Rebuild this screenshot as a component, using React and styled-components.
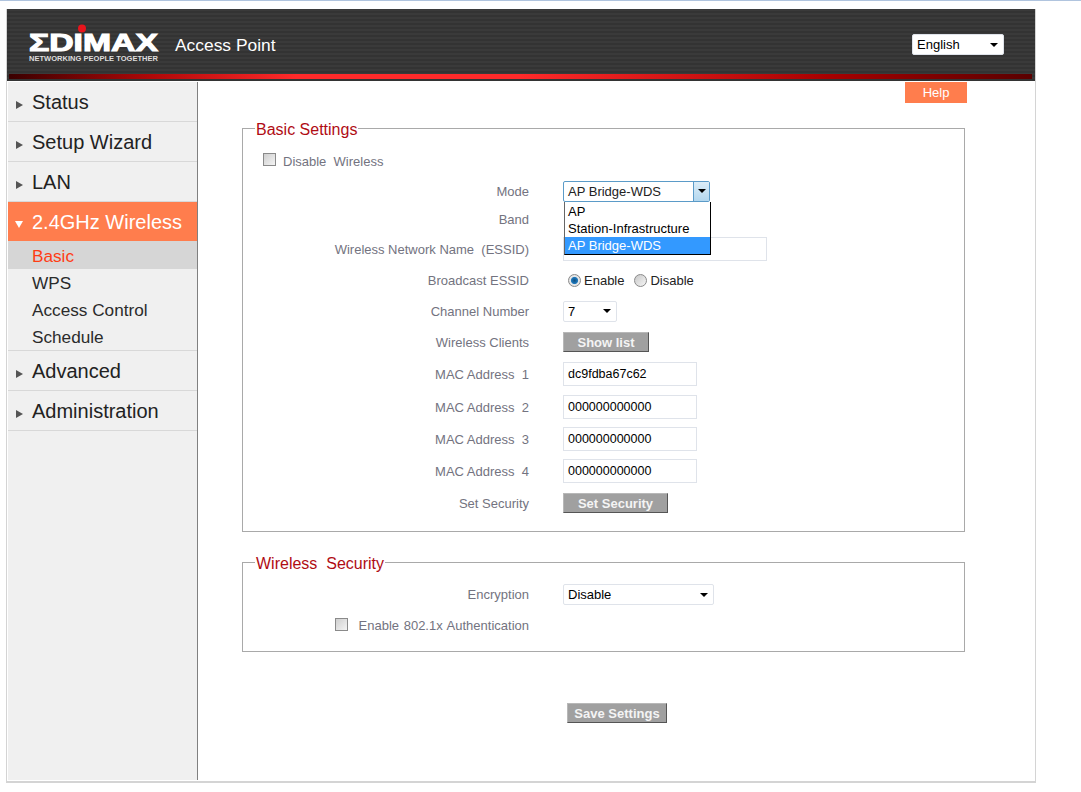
import React from 'react'
import styled, { createGlobalStyle } from 'styled-components'

const GlobalStyle = createGlobalStyle`
    html, body {
        margin: 0;
        padding: 0;
        background: #fff;
        font-family: "Liberation Sans", Arial, sans-serif;
    }
`

const TopLine = styled.div`
    height: 1px;
    background: #b0c4de;
    margin-bottom: 8px;
`

const Frame = styled.div`
    width: 1028px;
    height: 772px;
    margin-left: 6px;
    border: solid #d4d4d4;
    border-width: 0 1px 2px 1px;
    display: flex;
    flex-direction: column;
`

const Header = styled.header`
    height: 72px;
    flex: none;
    display: flex;
    flex-direction: column;
    background: repeating-linear-gradient(to bottom, #3a3a3a 0, #3a3a3a 2px, #333 2px, #333 4px);
`

const HeaderMain = styled.div`
    height: 65px;
    display: flex;
    align-items: center;
    padding: 6px 31px 0 20px;
    box-sizing: border-box;
`

const Logo = styled.svg`
    width: 134px;
    height: 42px;
    flex: none;
    margin-top: 1px;
`

const Product = styled.div`
    margin-left: 14px;
    margin-top: 2px;
    color: #fff;
    font-size: 17.4px;
    flex: 1;
`

const RedBar = styled.div`
    height: 5px;
    margin: 0 3px 0 2px;
    background: linear-gradient(to right, #3a0000 0, #b00808 14%, #ff2a2a 28%, #ff2a2a 50%, #a80000 80%, #5a0000 100%);
`

const Body = styled.div`
    flex: 1;
    display: flex;
    min-height: 0;
`

const Sidebar = styled.nav`
    width: 189px;
    margin: 1px 0 1px 1px;
    flex: none;
    background: #f0f0f0;
    border-right: 1px solid #808080;
`

const MenuItem = styled.div`
    height: 37px;
    padding-top: 2px;
    display: flex;
    align-items: center;
    font-size: 20px;
    color: ${p => (p.$active ? '#fff' : '#222')};
    background: ${p => (p.$active ? '#ff7d4d' : 'transparent')};
    border-bottom: ${p => (p.$active ? 'none' : '1px solid #d8d8d8')};
`

const Arrow = styled.span`
    width: 0;
    height: 0;
    margin: 4px 9px 0 8px;
    border-left: 7px solid #555;
    border-top: 4px solid transparent;
    border-bottom: 4px solid transparent;
`

const ArrowDown = styled.span`
    width: 0;
    height: 0;
    margin: 4px 9px 0 7px;
    border-top: 7px solid #fff;
    border-left: 4px solid transparent;
    border-right: 4px solid transparent;
`

const SubMenu = styled.div`
    border-bottom: 1px solid #d8d8d8;
`

const SubItem = styled.div`
    height: ${p => (p.$current ? '28px' : '27px')};
    box-sizing: border-box;
    padding: ${p => (p.$current ? '2px' : '1px')} 0 0 24px;
    display: flex;
    align-items: center;
    font-size: 17.2px;
    color: ${p => (p.$current ? '#ff3c14' : '#2b2b2b')};
    background: ${p => (p.$current ? '#d6d6d6' : 'transparent')};
`

const Main = styled.main`
    flex: 1;
    display: flex;
    flex-direction: column;
    padding: 1px 68px 0 44px;
`

const HelpButton = styled.div`
    align-self: flex-end;
    width: 62px;
    height: 21px;
    background: #ff7d4d;
    color: #fff;
    font-size: 13px;
    display: flex;
    align-items: center;
    justify-content: center;
`

const Group = styled.fieldset`
    margin: ${p => p.$top} 2px 0 0;
    padding: ${p => p.$pad || '0'} 0 0;
    border: 1px solid #a9a9a9;
    height: ${p => p.$height};
    box-sizing: border-box;
`

const Legend = styled.legend`
    margin-left: 12px;
    padding: 4px 1px 0;
    font-size: 16px;
    line-height: 18px;
    color: #b00c14;
`

const CheckLine = styled.div`
    display: flex;
    align-items: center;
    height: 20px;
    padding-left: 20px;
    margin: 12px 0 6px;
    font-size: 13px;
    color: #737380;
`

const Check = styled.span`
    width: 11px;
    height: 11px;
    flex: none;
    margin: 0 ${p => p.$gap || 7}px 3px 0;
    border: 1px solid #8a8a8a;
    background: linear-gradient(135deg, #cfcfcf, #f4f4f4);
`

const Row = styled.div`
    height: ${p => p.$h}px;
    display: grid;
    grid-template-columns: 286px 1fr;
    column-gap: 34px;
    align-items: center;
`

const Label = styled.div`
    display: flex;
    justify-content: flex-end;
    align-items: center;
    white-space: pre;
    font-size: 13px;
    color: #737380;
    word-spacing: ${p => (p.$spread ? '1px' : '0')};
`

const Control = styled.div`
    position: relative;
    display: flex;
    align-items: center;
    font-size: 13px;
    color: #222;
`

const SelectBox = styled.div`
    width: ${p => p.$w}px;
    height: 21px;
    box-sizing: border-box;
    padding-left: 4px;
    background: #fff;
    border: 1px solid #dfe3ea;
    border-radius: 2px;
    display: flex;
    align-items: center;
    justify-content: space-between;
    font-size: 13px;
    color: #000;
`

const Caret = styled.span`
    width: 0;
    height: 0;
    margin-right: 5px;
    border-top: 4px solid #000;
    border-left: 4px solid transparent;
    border-right: 4px solid transparent;
`

const ModeSelect = styled(SelectBox)`
    width: 147px;
    border-color: #5b9bc8;
    padding: 0 0 0 4px;
    color: #222;
`

const ModeButton = styled.span`
    width: 15px;
    height: 19px;
    display: flex;
    align-items: center;
    justify-content: center;
    background: linear-gradient(#dcedf8, #b3d7ee);
    border-left: 1px solid #5b9bc8;
`

const ModeCaret = styled(Caret)`
    margin: 0;
`

const DropList = styled.div`
    position: absolute;
    left: 1px;
    top: 21px;
    z-index: 2;
    width: 147px;
    height: 53px;
    box-sizing: border-box;
    background: #fff;
    border: 1px solid #000;
    border-top: none;
    border-left-color: #666;
    padding-top: 1px;
    font-size: 13px;
    color: #000;
`

const DropOption = styled.div`
    height: 17px;
    line-height: 17px;
    padding-left: 3px;
    color: ${p => (p.$selected ? '#fff' : '#000')};
    background: ${p => (p.$selected ? '#3399ff' : 'transparent')};
`

const TextBox = styled.div`
    width: ${p => p.$w}px;
    height: 24px;
    box-sizing: border-box;
    padding-left: 4px;
    border: 1px solid #dfe3ea;
    background: #fff;
    display: flex;
    align-items: center;
    font-size: 12.5px;
    color: #000;
`

const Radio = styled.span`
    width: 13px;
    height: 13px;
    flex: none;
    border-radius: 50%;
    box-sizing: border-box;
    margin: 0 3px 0 5px;
    border: 1px solid #8a8a8a;
    background: ${p => (p.$on
        ? 'radial-gradient(circle, #0f4f80 0, #1f78bc 40%, #e8e8e8 52%, #dcdcdc 100%)'
        : 'linear-gradient(135deg, #c8c8c8, #f6f6f6)')};
`

const RadioText = styled.span`
    margin-right: 5px;
    color: #222;
`

const GrayButton = styled.div`
    width: ${p => p.$w}px;
    height: 20px;
    box-sizing: border-box;
    background: #a0a0a0;
    border-right: 1px solid #555;
    border-bottom: 1px solid #555;
    border-top: 1px solid #b8b8b8;
    border-left: 1px solid #b8b8b8;
    color: #f4f4f4;
    font-size: 13px;
    font-weight: bold;
    display: flex;
    align-items: center;
    justify-content: center;
`

const SaveLine = styled.div`
    margin: 51px 0 0 325px;
`

const MENU_TOP = ['Status', 'Setup Wizard', 'LAN']
const MENU_BOTTOM = ['Advanced', 'Administration']
const SUB = ['Basic', 'WPS', 'Access Control', 'Schedule']
const MACS = ['dc9fdba67c62', '000000000000', '000000000000', '000000000000']
const MAC_HEIGHTS = [34, 32, 32, 32]

function EdimaxLogo() {
    return (
        <Logo viewBox="0 0 134 42">
            <circle cx="55" cy="4.5" r="4" fill="#e8141c" />
            <text x="2" y="27" fontFamily="Liberation Sans" fontWeight="bold" fontSize="23" fill="#fff" stroke="#fff" strokeWidth="1" textLength="129" lengthAdjust="spacingAndGlyphs">ΣDIMAX</text>
            <text x="2" y="36.5" fontFamily="Liberation Sans" fontWeight="bold" fontSize="7" fill="#ddd" textLength="129" lengthAdjust="spacingAndGlyphs">NETWORKING PEOPLE TOGETHER</text>
        </Logo>
    )
}

export default function App() {
    return (
        <>
            <GlobalStyle />
            <TopLine />
            <Frame>
                <Header>
                    <HeaderMain>
                        <EdimaxLogo />
                        <Product>Access Point</Product>
                        <SelectBox $w={92}>English<Caret /></SelectBox>
                    </HeaderMain>
                    <RedBar />
                </Header>
                <Body>
                    <Sidebar>
                        {MENU_TOP.map(m => (
                            <MenuItem key={m}><Arrow />{m}</MenuItem>
                        ))}
                        <MenuItem $active><ArrowDown />2.4GHz Wireless</MenuItem>
                        <SubMenu>
                            {SUB.map((s, i) => (
                                <SubItem key={s} $current={i === 0}>{s}</SubItem>
                            ))}
                        </SubMenu>
                        {MENU_BOTTOM.map(m => (
                            <MenuItem key={m}><Arrow />{m}</MenuItem>
                        ))}
                    </Sidebar>
                    <Main>
                        <HelpButton>Help</HelpButton>
                        <Group $top="14px" $height="415px">
                            <Legend>Basic Settings</Legend>
                            <CheckLine><Check />Disable{'\u00a0 '}Wireless</CheckLine>
                            <Row $h={28}>
                                <Label>Mode</Label>
                                <Control>
                                    <ModeSelect>
                                        AP Bridge-WDS
                                        <ModeButton><ModeCaret /></ModeButton>
                                    </ModeSelect>
                                    <DropList>
                                        <DropOption>AP</DropOption>
                                        <DropOption>Station-Infrastructure</DropOption>
                                        <DropOption $selected>AP Bridge-WDS</DropOption>
                                    </DropList>
                                </Control>
                            </Row>
                            <Row $h={28}><Label>Band</Label><Control /></Row>
                            <Row $h={32}>
                                <Label>Wireless Network Name{'\u00a0 '}(ESSID)</Label>
                                <Control><TextBox $w={204} /></Control>
                            </Row>
                            <Row $h={30}>
                                <Label>Broadcast ESSID</Label>
                                <Control>
                                    <Radio $on /><RadioText>Enable</RadioText>
                                    <Radio /><RadioText>Disable</RadioText>
                                </Control>
                            </Row>
                            <Row $h={32}>
                                <Label>Channel Number</Label>
                                <Control><SelectBox $w={54}>7<Caret /></SelectBox></Control>
                            </Row>
                            <Row $h={30}>
                                <Label>Wireless Clients</Label>
                                <Control><GrayButton $w={86}>Show list</GrayButton></Control>
                            </Row>
                            {MACS.map((mac, i) => (
                                <Row key={i} $h={MAC_HEIGHTS[i]}>
                                    <Label>MAC Address{'\u00a0 '}{i + 1}</Label>
                                    <Control><TextBox $w={134}>{mac}</TextBox></Control>
                                </Row>
                            ))}
                            <Row $h={32}>
                                <Label>Set Security</Label>
                                <Control><GrayButton $w={105}>Set Security</GrayButton></Control>
                            </Row>
                        </Group>
                        <Group $top="19px" $height="101px" $pad="6px">
                            <Legend>Wireless{'\u00a0 '}Security</Legend>
                            <Row $h={31}>
                                <Label>Encryption</Label>
                                <Control><SelectBox $w={151}>Disable<Caret /></SelectBox></Control>
                            </Row>
                            <Row $h={31}>
                                <Label $spread><Check $gap={11} />Enable 802.1x Authentication</Label>
                                <Control />
                            </Row>
                        </Group>
                        <SaveLine><GrayButton $w={100}>Save Settings</GrayButton></SaveLine>
                    </Main>
                </Body>
            </Frame>
        </>
    )
}
